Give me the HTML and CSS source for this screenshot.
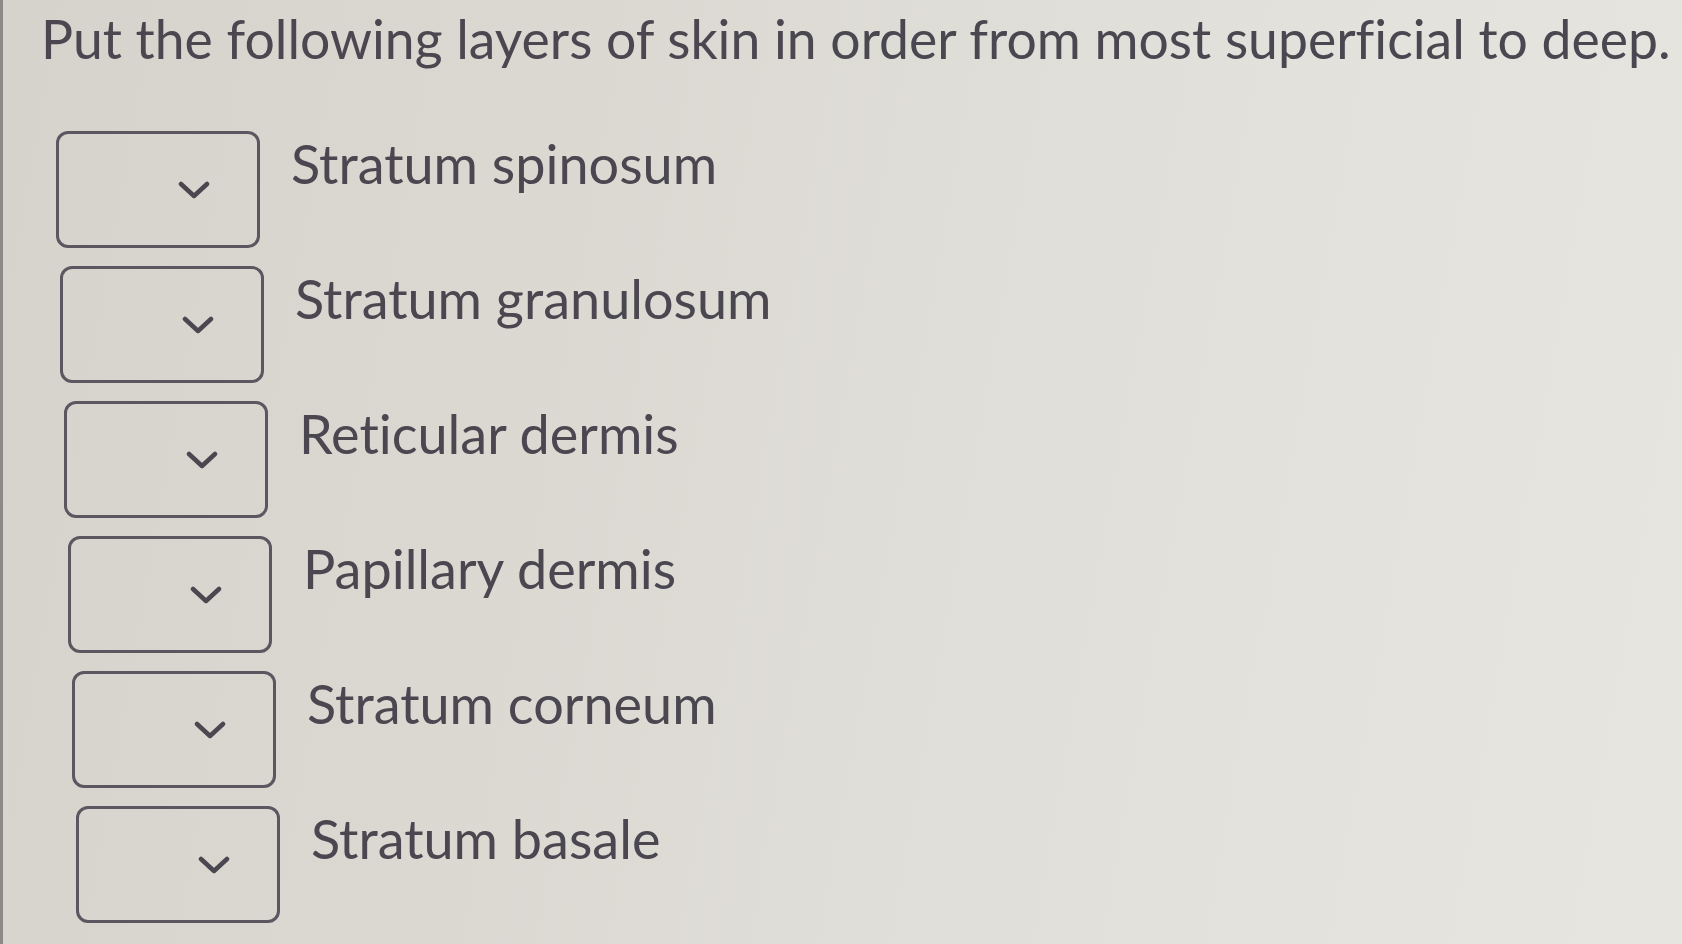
FILE: index.html
```html
<!DOCTYPE html>
<html lang="en">

<head>
    <meta charset="UTF-8">
    <meta name="viewport" content="width=device-width, initial-scale=1.0">
    <title>Skin Layers</title>
    <link rel="stylesheet" href="styles.css">
</head>

<body>
    <div class="question">
        <h1>Put the following layers of skin in order from most superficial to deep.</h1>

        <div class="rows">
            <div class="row">
                <div class="select-box">
                    <svg class="chevron" viewBox="0 0 32 20"><path d="M3 4 L16 16 L29 4"/></svg>
                </div>
                <span class="label">Stratum spinosum</span>
            </div>
            <div class="row">
                <div class="select-box">
                    <svg class="chevron" viewBox="0 0 32 20"><path d="M3 4 L16 16 L29 4"/></svg>
                </div>
                <span class="label">Stratum granulosum</span>
            </div>
            <div class="row">
                <div class="select-box">
                    <svg class="chevron" viewBox="0 0 32 20"><path d="M3 4 L16 16 L29 4"/></svg>
                </div>
                <span class="label">Reticular dermis</span>
            </div>
            <div class="row">
                <div class="select-box">
                    <svg class="chevron" viewBox="0 0 32 20"><path d="M3 4 L16 16 L29 4"/></svg>
                </div>
                <span class="label">Papillary dermis</span>
            </div>
            <div class="row">
                <div class="select-box">
                    <svg class="chevron" viewBox="0 0 32 20"><path d="M3 4 L16 16 L29 4"/></svg>
                </div>
                <span class="label">Stratum corneum</span>
            </div>
            <div class="row">
                <div class="select-box">
                    <svg class="chevron" viewBox="0 0 32 20"><path d="M3 4 L16 16 L29 4"/></svg>
                </div>
                <span class="label">Stratum basale</span>
            </div>
        </div>
    </div>
</body>

</html>
```

FILE: styles.css
```css
body {
    font-family: Lato, "Open Sans", sans-serif;
    font-variant-ligatures: none;
    margin: 0;
    padding: 0;
    height: 944px;
    overflow: hidden;
    background: linear-gradient(100deg, #d5d3cb 0%, #dbd9d2 35%, #e2e1db 70%, #e6e5e0 100%);
    border-left: 3px solid #8c8a86;
    box-sizing: border-box;
    color: #4a4751;
}

.question {
    padding: 6px 0 0 38px;
}

h1 {
    margin: 0;
    font-size: 53.5px;
    font-weight: 400;
    line-height: 64px;
    white-space: nowrap;
}

.rows {
    display: flex;
    flex-direction: column;
    gap: 18px;
    margin-top: 61px;
}

.row {
    display: flex;
    align-items: flex-start;
    gap: 31px;
    padding-left: 15px;
}

.row:nth-child(2) { padding-left: 19px; }
.row:nth-child(3) { padding-left: 23px; }
.row:nth-child(4) { padding-left: 27px; }
.row:nth-child(5) { padding-left: 31px; }
.row:nth-child(6) { padding-left: 35px; }

.select-box {
    width: 204px;
    height: 117px;
    border: 3px solid #5a5760;
    border-radius: 12px;
    display: flex;
    align-items: center;
    justify-content: flex-end;
    padding-right: 47px;
    box-sizing: border-box;
    flex-shrink: 0;
}

.chevron {
    width: 32px;
    height: 20px;
    fill: none;
    stroke: #4a4751;
    stroke-width: 4.5;
    stroke-linecap: round;
    stroke-linejoin: round;
}

.label {
    font-size: 54px;
    line-height: 64px;
    margin-top: 1px;
}
```
